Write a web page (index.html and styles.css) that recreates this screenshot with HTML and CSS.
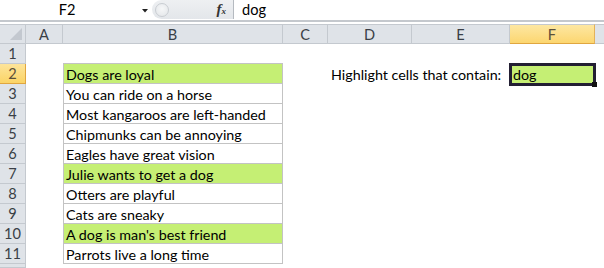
FILE: index.html
```html
<!DOCTYPE html>
<html>
<head>
<meta charset="utf-8">
<link rel="stylesheet" href="styles.css">
</head>
<body>
<div class="app">
  <div class="fbar">
    <div class="namebox">
      <span class="name">F2</span>
      <svg class="arrow" width="6" height="4" viewBox="0 0 6 4"><path d="M0 0H6L3 3.5Z" fill="#222"/></svg>
    </div>
    <div class="capsule">
      <span class="knob"></span>
      <span class="fx"><i>f</i><span class="fx-x">x</span></span>
    </div>
    <div class="formula">dog</div>
  </div>
  <div class="spacer"></div>
  <div class="grid">
    <div class="h corner"><svg width="12" height="12" viewBox="0 0 12 12"><path d="M12 0V12H0Z" fill="#c3c8cf"/></svg></div>
    <div class="h col">A</div>
    <div class="h col">B</div>
    <div class="h col">C</div>
    <div class="h col">D</div>
    <div class="h col">E</div>
    <div class="h col selh">F</div>
    <div class="h col last"></div>

    <div class="h row">1</div><div class="c"></div><div class="c b1"></div><div class="c"></div><div class="c"></div><div class="c"></div><div class="c"></div><div class="c"></div>

    <div class="h row selr">2</div><div class="c"></div><div class="c b hl">Dogs are loyal</div><div class="c"></div><div class="c ov">Highlight cells that contain:</div><div class="c"></div><div class="c f2"><span>dog</span><div class="sel"><span class="handle"></span></div></div><div class="c"></div>

    <div class="h row">3</div><div class="c"></div><div class="c b">You can ride on a horse</div><div class="c"></div><div class="c"></div><div class="c"></div><div class="c"></div><div class="c"></div>

    <div class="h row">4</div><div class="c"></div><div class="c b">Most kangaroos are left-handed</div><div class="c"></div><div class="c"></div><div class="c"></div><div class="c"></div><div class="c"></div>

    <div class="h row">5</div><div class="c"></div><div class="c b">Chipmunks can be annoying</div><div class="c"></div><div class="c"></div><div class="c"></div><div class="c"></div><div class="c"></div>

    <div class="h row">6</div><div class="c"></div><div class="c b">Eagles have great vision</div><div class="c"></div><div class="c"></div><div class="c"></div><div class="c"></div><div class="c"></div>

    <div class="h row">7</div><div class="c"></div><div class="c b hl">Julie wants to get a dog</div><div class="c"></div><div class="c"></div><div class="c"></div><div class="c"></div><div class="c"></div>

    <div class="h row">8</div><div class="c"></div><div class="c b">Otters are playful</div><div class="c"></div><div class="c"></div><div class="c"></div><div class="c"></div><div class="c"></div>

    <div class="h row">9</div><div class="c"></div><div class="c b">Cats are sneaky</div><div class="c"></div><div class="c"></div><div class="c"></div><div class="c"></div><div class="c"></div>

    <div class="h row">10</div><div class="c"></div><div class="c b hl">A dog is man's best friend</div><div class="c"></div><div class="c"></div><div class="c"></div><div class="c"></div><div class="c"></div>

    <div class="h row">11</div><div class="c"></div><div class="c b">Parrots live a long time</div><div class="c"></div><div class="c"></div><div class="c"></div><div class="c"></div><div class="c"></div>

    <div class="h row"></div><div class="c"></div><div class="c"></div><div class="c"></div><div class="c"></div><div class="c"></div><div class="c"></div><div class="c"></div>
  </div>
</div>
</body>
</html>
```
FILE: styles.css
```css
* { box-sizing: border-box; }
html, body { margin: 0; padding: 0; background: #fff; }
body { width: 604px; height: 268px; overflow: hidden; font-family: Lato, "Liberation Sans", sans-serif; font-size: 14.3px; color: #000; }
.app { width: 604px; }

.fbar { display: flex; height: 22px; border-bottom: 2px solid #c4c8cd; background: #fff; }
.namebox { width: 152px; display: flex; align-items: center; position: relative; }
.name { width: 134px; text-align: center; line-height: 20px; font-size: 14.6px; }
.arrow { margin-left: 8px; margin-top: 1px; }
.capsule { width: 82px; height: 19px; background: linear-gradient(#eef0f2, #e3e6ea); border-radius: 10px 0 0 10px; border-right: 1px solid #b5bac0; display: flex; align-items: center; padding-left: 3px; }
.knob { width: 14px; height: 14px; border-radius: 50%; border: 1px solid #c9cdd2; background: radial-gradient(circle at 50% 40%, #f6f7f8, #e2e5e8); }
.fx { margin-left: auto; margin-right: 7px; font-family: "Liberation Serif", serif; font-weight: bold; color: #333; font-size: 14px; line-height: 14px; }
.fx i { font-size: 15px; }
.fx-x { font-size: 9px; font-style: italic; }
.formula { padding-left: 8px; line-height: 20px; flex: 1; font-size: 14.6px; }

.spacer { height: 2px; }

.grid { display: grid; grid-template-columns: 26px 37px 220px 45px 84px 98px 85px 1fr; grid-template-rows: repeat(12, 20px) 4px; }
.h { background: #dfe3e8; color: #3a3f46; display: flex; align-items: center; justify-content: center; border-right: 1px solid #c4c9cf; border-bottom: 1px solid #c4c9cf; line-height: 18px; font-size: 14.6px; }
.col { border-top: 1px solid #c4c9cf; padding-top: 1px; }
.corner { border-top: 1px solid #c4c9cf; justify-content: flex-end; align-items: flex-end; padding: 0 3px 3px 0; }
.corner svg { display: block; }
.row { padding-top: 1px; }
.last { border-right: none; }
.selh { background: linear-gradient(#fde7a2, #fcd670); border-right: 1px solid #e3b25a; border-bottom: 1px solid #e0a640; color: #5b4f3a; }
.selr { background: linear-gradient(#fde49a, #fbd466); border-bottom: 1px solid #e0a640; border-right: 1px solid #e0a640; color: #5b4f3a; }

.c { background: #fff; line-height: 19px; padding-left: 3px; padding-top: 1px; white-space: nowrap; }
.b1 { border-bottom: 1px solid #c3c3c3; }
.b { border-left: 1px solid #c3c3c3; border-right: 1px solid #c3c3c3; border-bottom: 1px solid #c3c3c3; padding-left: 2px; }
.hl { background: #c5ef74; }
.ov { overflow: visible; position: relative; z-index: 1; }
.f2 { background: #c5ef74; position: relative; }
.sel { position: absolute; left: -1px; top: -1px; right: -1px; bottom: -2px; border: 3px solid #231f33; }
.handle { position: absolute; right: -4px; bottom: -4px; width: 5px; height: 5px; background: #111; }
```
